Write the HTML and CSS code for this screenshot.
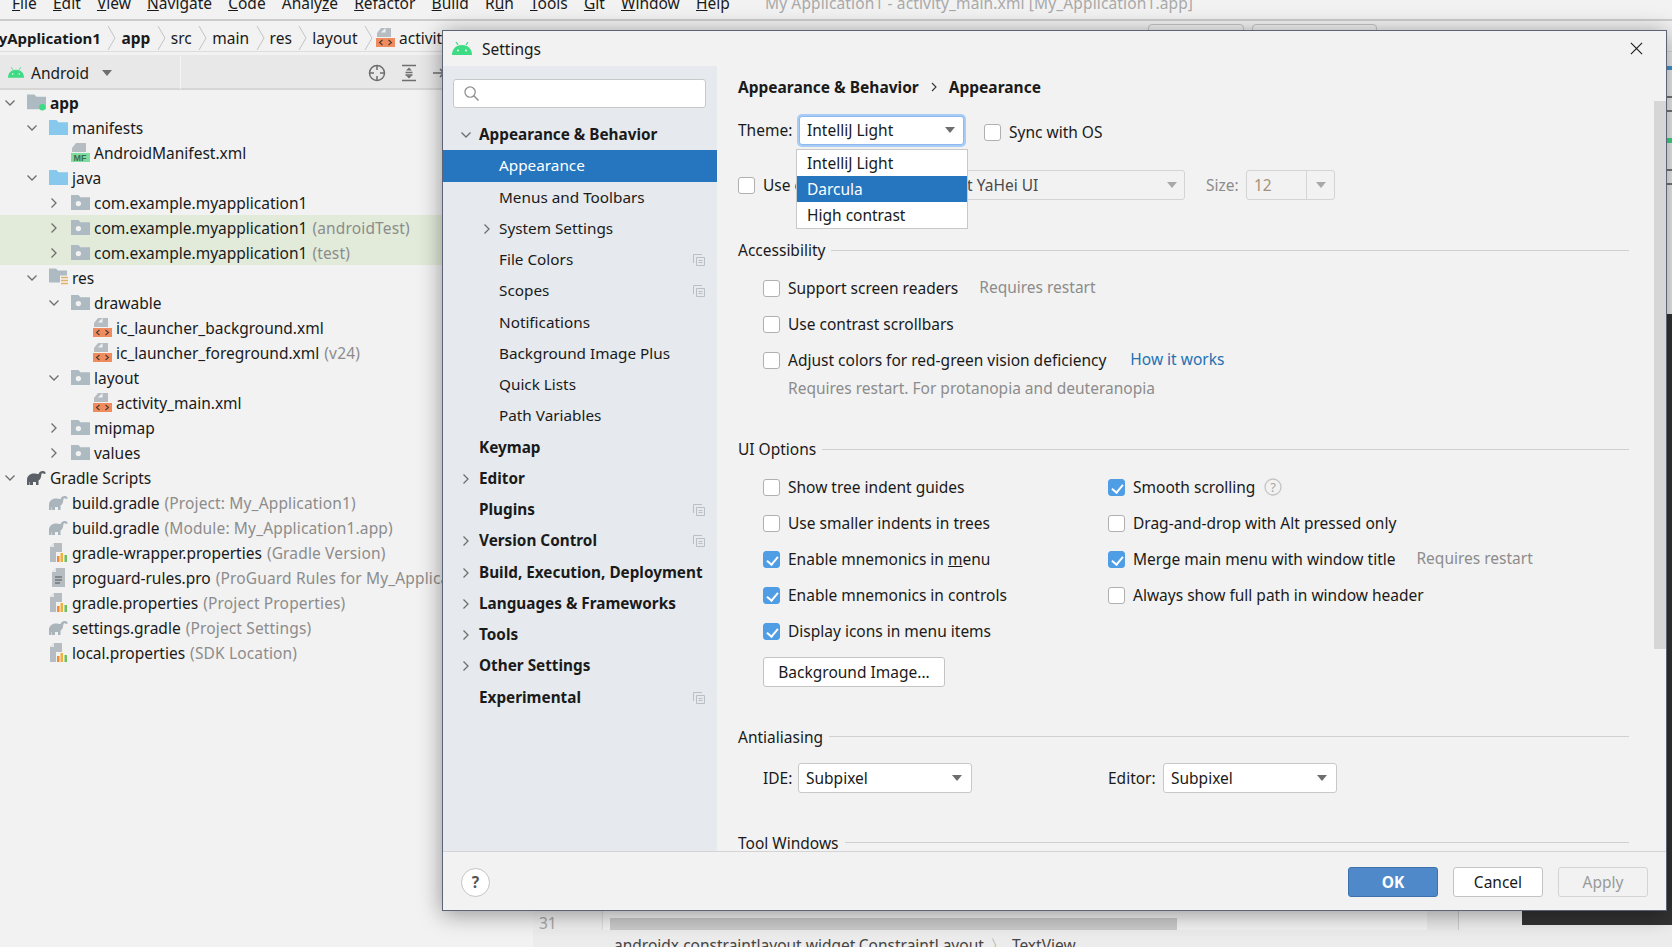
FILE: index.html
```html
<!DOCTYPE html>
<html lang="en">
<head>
    <meta charset="UTF-8">
    <meta name="viewport" content="width=device-width, initial-scale=1.0">
    <title>Settings - My Application1</title>
    <link rel="stylesheet" href="styles.css">
</head>
<body>

    <!-- Shared icons -->
    <svg class="sprites" width="0" height="0">
        <symbol id="i-android" viewBox="0 0 20 13">
            <path d="M4 0l2 3M16 0l-2 3" stroke="#3ddc84" stroke-width="1.2" fill="none"/>
            <path d="M0 13C0 7 4 3 10 3s10 4 10 10z" fill="#3ddc84"/>
            <circle cx="6" cy="8.5" r="1" fill="#f2f2f2"/>
            <circle cx="14" cy="8.5" r="1" fill="#f2f2f2"/>
        </symbol>
        <symbol id="i-down" viewBox="0 0 12 12">
            <path d="M1.5 3.5L6 8l4.500-4.500" stroke="#6e6e6e" stroke-width="1.300" fill="none"/>
        </symbol>
        <symbol id="i-right" viewBox="0 0 12 12">
            <path d="M3.500 1.500L8 6l-4.500 4.500" stroke="#6e6e6e" stroke-width="1.300" fill="none"/>
        </symbol>
        <symbol id="i-folder-blue" viewBox="0 0 18 14">
            <path d="M0 0h7l2 2h9v12H0z" fill="#87c9ec"/>
        </symbol>
        <symbol id="i-package" viewBox="0 0 18 14">
            <path d="M0 0h7l2 2h9v12H0z" fill="#aebac2"/>
            <circle cx="7" cy="8" r="2.500" fill="#f2f2f2"/>
        </symbol>
        <symbol id="i-module" viewBox="0 0 18 15">
            <path d="M0 0h7l2 2h9v12H0z" fill="#aebac2"/>
            <circle cx="14.500" cy="12" r="3" fill="#3ddc84"/>
        </symbol>
        <symbol id="i-res" viewBox="0 0 19 18">
            <path d="M0 0h7l2 2h9v12H0z" fill="#aebac2"/>
            <rect x="11" y="7" width="8" height="11" fill="#f2f2f2"/>
            <path d="M12 9h7M12 12h7M12 15h7" stroke="#e3b06a" stroke-width="1.300"/>
        </symbol>
        <symbol id="i-xml" viewBox="0 0 19 19">
            <path d="M5 0h10v9H5zM5 0L1 5v4h4z" fill="#b5bcc2"/>
            <path d="M5 4.500L9.500 0v4.500z" fill="#f2f2f2"/>
            <rect y="10" width="19" height="9" fill="#f08b5e"/>
            <path d="M6.500 12l-3 2.500 3 2.500M12.500 12l3 2.500-3 2.500" stroke="#4a3a30" stroke-width="1.100" fill="none"/>
        </symbol>
        <symbol id="i-gradle" viewBox="0 0 19 15">
            <path d="M0 15V10C0 6 3 3.500 7 3.500c2 0 3 .6 4.500.6C12.500 1 16.500 0 18.500 2.500c.5 1-.6 2-1.600 1.200-.8-.9-2.300-.6-2.600 1 0 3-1.300 5-2.800 5.800V15H9v-3H6v3H3v-3H2.600L2.500 15z" fill="#a9b4bb"/>
        </symbol>
        <symbol id="i-gradle-dark" viewBox="0 0 19 15">
            <path d="M0 15V10C0 6 3 3.500 7 3.500c2 0 3 .6 4.500.6C12.500 1 16.500 0 18.500 2.500c.5 1-.6 2-1.600 1.200-.8-.9-2.300-.6-2.600 1 0 3-1.300 5-2.800 5.800V15H9v-3H6v3H3v-3H2.600L2.500 15z" fill="#5b6166"/>
        </symbol>
        <symbol id="i-props" viewBox="0 0 17 19">
            <path d="M4 0h8v19H0V4z" fill="#b5bcc2"/>
            <path d="M4 0v4H0z" fill="#e8e8e8"/>
            <rect x="6" y="9" width="11" height="10" fill="#f2f2f2"/>
            <path d="M7 13h2.500v6H7z" fill="#f08b3c"/>
            <path d="M10.500 10H13v9h-2.500z" fill="#f0b13c"/>
            <path d="M14.500 12H17v7h-2.500z" fill="#6fbf5a"/>
        </symbol>
        <symbol id="i-pro" viewBox="0 0 13 19">
            <path d="M4 0h9v19H0V4z" fill="#b5bcc2"/>
            <path d="M4 0v4H0z" fill="#e8e8e8"/>
            <path d="M3 9h7M3 12h7M3 15h5" stroke="#555" stroke-width="1.200"/>
        </symbol>
        <symbol id="i-copy" viewBox="0 0 12 12">
            <path d="M.5 9V.5h8.500M3.500 3.500h8v8h-8zM5.500 6.500h4M5.500 8.500h4" stroke="#b9bfc5" stroke-width="1" fill="none"/>
        </symbol>
    </svg>

    <!-- IDE window behind the dialog -->
    <div class="ide">
        <div class="menubar">
            <span><u>F</u>ile</span>
            <span><u>E</u>dit</span>
            <span><u>V</u>iew</span>
            <span><u>N</u>avigate</span>
            <span><u>C</u>ode</span>
            <span>Analy<u>z</u>e</span>
            <span><u>R</u>efactor</span>
            <span><u>B</u>uild</span>
            <span>R<u>u</u>n</span>
            <span><u>T</u>ools</span>
            <span><u>G</u>it</span>
            <span><u>W</u>indow</span>
            <span><u>H</u>elp</span>
            <span class="window-title">My Application1 - activity_main.xml [My_Application1.app]</span>
        </div>

        <div class="navbar">
            <b class="first-crumb">MyApplication1</b>
            <svg class="crumb-sep"><path d="M1 2l7 12-7 12" stroke="#c4c4c4" fill="none"/></svg>
            <b>app</b>
            <svg class="crumb-sep"><path d="M1 2l7 12-7 12" stroke="#c4c4c4" fill="none"/></svg>
            <span>src</span>
            <svg class="crumb-sep"><path d="M1 2l7 12-7 12" stroke="#c4c4c4" fill="none"/></svg>
            <span>main</span>
            <svg class="crumb-sep"><path d="M1 2l7 12-7 12" stroke="#c4c4c4" fill="none"/></svg>
            <span>res</span>
            <svg class="crumb-sep"><path d="M1 2l7 12-7 12" stroke="#c4c4c4" fill="none"/></svg>
            <span>layout</span>
            <svg class="crumb-sep"><path d="M1 2l7 12-7 12" stroke="#c4c4c4" fill="none"/></svg>
            <svg class="icon-file"><use href="#i-xml"/></svg>
            <span>activity_main.xml</span>
            <div class="nav-tools">
                <div class="nav-tool wide"></div>
                <div class="nav-tool wider"></div>
            </div>
        </div>

        <div class="workspace">
            <div class="project">
                <div class="project-head">
                    <svg class="icon-android"><use href="#i-android"/></svg>
                    <span class="project-title">Android</span>
                    <span class="caret project-caret"></span>
                    <span class="head-divider"></span>
                    <svg class="head-tool" viewBox="0 0 18 18"><circle cx="9" cy="9" r="7.500" fill="none" stroke="#6e6e6e" stroke-width="1.500"/><path d="M9 1v5M9 12v5M1 9h5M12 9h5" stroke="#6e6e6e" stroke-width="1.500"/></svg>
                    <svg class="head-tool" viewBox="0 0 18 18"><path d="M2 1.500h14M2 16.500h14M5.500 8.500h7M5.500 11h7" stroke="#6e6e6e" stroke-width="1.500"/><path d="M9 3.500l3 3H6zM9 14.500l-3-3h6z" fill="#6e6e6e"/></svg>
                    <svg class="head-tool" viewBox="0 0 18 18"><path d="M1 9h11M8 5l4 4-4 4M15.500 2v14" stroke="#6e6e6e" stroke-width="1.500" fill="none"/></svg>
                </div>
                <div class="tree">
                    <div class="row l0"><svg class="chev"><use href="#i-down"/></svg><svg class="ico"><use href="#i-module"/></svg><b>app</b></div>
                    <div class="row l1"><svg class="chev"><use href="#i-down"/></svg><svg class="ico"><use href="#i-folder-blue"/></svg>manifests</div>
                    <div class="row l2"><span class="chev"></span><svg class="ico" viewBox="0 0 19 19"><path d="M5 0h10v9H5zM5 0L1 5v4h4z" fill="#b5bcc2"/><rect y="10" width="19" height="9" fill="#7fdc9f"/><text x="2.500" y="18" class="mf-text">MF</text></svg>AndroidManifest.xml</div>
                    <div class="row l1"><svg class="chev"><use href="#i-down"/></svg><svg class="ico"><use href="#i-folder-blue"/></svg>java</div>
                    <div class="row l2"><svg class="chev"><use href="#i-right"/></svg><svg class="ico"><use href="#i-package"/></svg>com.example.myapplication1</div>
                    <div class="row l2 tinted"><svg class="chev"><use href="#i-right"/></svg><svg class="ico"><use href="#i-package"/></svg>com.example.myapplication1<i>(androidTest)</i></div>
                    <div class="row l2 tinted"><svg class="chev"><use href="#i-right"/></svg><svg class="ico"><use href="#i-package"/></svg>com.example.myapplication1<i>(test)</i></div>
                    <div class="row l1"><svg class="chev"><use href="#i-down"/></svg><svg class="ico"><use href="#i-res"/></svg>res</div>
                    <div class="row l2"><svg class="chev"><use href="#i-down"/></svg><svg class="ico"><use href="#i-package"/></svg>drawable</div>
                    <div class="row l3"><span class="chev"></span><svg class="ico"><use href="#i-xml"/></svg>ic_launcher_background.xml</div>
                    <div class="row l3"><span class="chev"></span><svg class="ico"><use href="#i-xml"/></svg>ic_launcher_foreground.xml<i>(v24)</i></div>
                    <div class="row l2"><svg class="chev"><use href="#i-down"/></svg><svg class="ico"><use href="#i-package"/></svg>layout</div>
                    <div class="row l3"><span class="chev"></span><svg class="ico"><use href="#i-xml"/></svg>activity_main.xml</div>
                    <div class="row l2"><svg class="chev"><use href="#i-right"/></svg><svg class="ico"><use href="#i-package"/></svg>mipmap</div>
                    <div class="row l2"><svg class="chev"><use href="#i-right"/></svg><svg class="ico"><use href="#i-package"/></svg>values</div>
                    <div class="row l0"><svg class="chev"><use href="#i-down"/></svg><svg class="ico"><use href="#i-gradle-dark"/></svg>Gradle Scripts</div>
                    <div class="row l1"><span class="chev"></span><svg class="ico"><use href="#i-gradle"/></svg>build.gradle<i>(Project: My_Application1)</i></div>
                    <div class="row l1"><span class="chev"></span><svg class="ico"><use href="#i-gradle"/></svg>build.gradle<i>(Module: My_Application1.app)</i></div>
                    <div class="row l1"><span class="chev"></span><svg class="ico"><use href="#i-props"/></svg>gradle-wrapper.properties<i>(Gradle Version)</i></div>
                    <div class="row l1"><span class="chev"></span><svg class="ico"><use href="#i-pro"/></svg>proguard-rules.pro<i>(ProGuard Rules for My_Application1.app)</i></div>
                    <div class="row l1"><span class="chev"></span><svg class="ico"><use href="#i-props"/></svg>gradle.properties<i>(Project Properties)</i></div>
                    <div class="row l1"><span class="chev"></span><svg class="ico"><use href="#i-gradle"/></svg>settings.gradle<i>(Project Settings)</i></div>
                    <div class="row l1"><span class="chev"></span><svg class="ico"><use href="#i-props"/></svg>local.properties<i>(SDK Location)</i></div>
                </div>
            </div>

            <div class="editor">
                <div class="editor-body">
                    <div class="gutter"><span>31</span></div>
                    <div class="code"><div class="hscroll"></div></div>
                    <div class="strip"></div>
                    <div class="strip-rows"></div>
                    <div class="preview">
                        <div class="preview-tools">
                            <span class="tool-blue"></span>
                            <span class="tool-lines"></span>
                            <span class="tool-green"></span>
                            <span class="tool-lines"></span>
                        </div>
                        <div class="preview-dark"></div>
                    </div>
                </div>
                <div class="editor-crumbs">
                    <span>androidx.constraintlayout.widget.ConstraintLayout</span>
                    <span class="editor-sep">&#x3009;</span>
                    <span>TextView</span>
                </div>
            </div>
        </div>
    </div>

    <!-- Settings dialog -->
    <div class="dialog">
        <div class="dialog-title">
            <svg class="icon-settings"><use href="#i-android"/></svg>
            <span>Settings</span>
            <svg class="dialog-close" viewBox="0 0 14 14"><path d="M1 1l12 12M13 1L1 13" stroke="#1a1a1a" stroke-width="1.200"/></svg>
        </div>

        <div class="dialog-body">
            <!-- Left nav -->
            <div class="sidebar">
                <div class="search">
                    <svg class="search-icon" viewBox="0 0 16 16"><circle cx="6.500" cy="6.500" r="5.500" fill="none" stroke="#8c8c8c" stroke-width="1.300"/><path d="M10.500 10.500l5 5" stroke="#8c8c8c" stroke-width="1.500"/></svg>
                </div>
                <div class="nav">
                    <div class="nav-row top"><svg class="nav-chev"><use href="#i-down"/></svg>Appearance &amp; Behavior</div>
                    <div class="nav-row sub selected">Appearance</div>
                    <div class="nav-row sub">Menus and Toolbars</div>
                    <div class="nav-row sub"><svg class="nav-chev sub-chev"><use href="#i-right"/></svg>System Settings</div>
                    <div class="nav-row sub">File Colors<svg class="copy"><use href="#i-copy"/></svg></div>
                    <div class="nav-row sub">Scopes<svg class="copy"><use href="#i-copy"/></svg></div>
                    <div class="nav-row sub">Notifications</div>
                    <div class="nav-row sub">Background Image Plus</div>
                    <div class="nav-row sub">Quick Lists</div>
                    <div class="nav-row sub">Path Variables</div>
                    <div class="nav-row top">Keymap</div>
                    <div class="nav-row top"><svg class="nav-chev"><use href="#i-right"/></svg>Editor</div>
                    <div class="nav-row top">Plugins<svg class="copy"><use href="#i-copy"/></svg></div>
                    <div class="nav-row top"><svg class="nav-chev"><use href="#i-right"/></svg>Version Control<svg class="copy"><use href="#i-copy"/></svg></div>
                    <div class="nav-row top"><svg class="nav-chev"><use href="#i-right"/></svg>Build, Execution, Deployment</div>
                    <div class="nav-row top"><svg class="nav-chev"><use href="#i-right"/></svg>Languages &amp; Frameworks</div>
                    <div class="nav-row top"><svg class="nav-chev"><use href="#i-right"/></svg>Tools</div>
                    <div class="nav-row top"><svg class="nav-chev"><use href="#i-right"/></svg>Other Settings</div>
                    <div class="nav-row top">Experimental<svg class="copy"><use href="#i-copy"/></svg></div>
                </div>
            </div>

            <!-- Appearance page -->
            <div class="content">
                <div class="page-crumb">
                    <b>Appearance &amp; Behavior</b>
                    <svg class="page-sep" viewBox="0 0 8 10"><path d="M2 1l4 4-4 4" stroke="#333" stroke-width="1.100" fill="none"/></svg>
                    <b>Appearance</b>
                </div>

                <div class="theme-row">
                    <span class="theme-label">Theme:</span>
                    <div class="combo focused">IntelliJ Light<span class="caret"></span></div>
                    <label class="check sync"><span class="box"></span>Sync with OS</label>
                </div>

                <div class="font-row">
                    <span class="box"></span>
                    <span class="use-label">Use custom font:</span>
                    <div class="combo disabled font-combo">Microsoft YaHei UI<span class="caret light"></span></div>
                    <span class="size-label">Size:</span>
                    <div class="combo disabled size-combo"><span class="size-value">12</span><span class="size-arrow"><span class="caret light"></span></span></div>
                </div>

                <div class="group-title first-group"><span>Accessibility</span></div>
                <div class="group">
                    <div class="opt"><span class="box"></span>Support screen readers<span class="hint">Requires restart</span></div>
                    <div class="opt"><span class="box"></span>Use contrast scrollbars</div>
                    <div class="opt"><span class="box"></span>Adjust colors for red-green vision deficiency<a class="link">How it works</a></div>
                    <div class="note">Requires restart. For protanopia and deuteranopia</div>
                </div>

                <div class="group-title"><span>UI Options</span></div>
                <div class="group options-grid">
                    <div class="opt"><span class="box"></span>Show tree indent guides</div>
                    <div class="opt"><span class="box on"></span>Smooth scrolling<svg class="help-small" viewBox="0 0 18 18"><circle cx="9" cy="9" r="8" fill="none" stroke="#c4c4c4" stroke-width="1.300"/><text x="9" y="13.500" class="help-mark">?</text></svg></div>
                    <div class="opt"><span class="box"></span>Use smaller indents in trees</div>
                    <div class="opt"><span class="box"></span>Drag-and-drop with Alt pressed only</div>
                    <div class="opt"><span class="box on"></span><span>Enable mnemonics in <u>m</u>enu</span></div>
                    <div class="opt"><span class="box on"></span>Merge main menu with window title<span class="hint">Requires restart</span></div>
                    <div class="opt"><span class="box on"></span>Enable mnemonics in controls</div>
                    <div class="opt"><span class="box"></span>Always show full path in window header</div>
                    <div class="opt"><span class="box on"></span>Display icons in menu items</div>
                </div>
                <button class="btn bg-btn">Background Image...</button>

                <div class="group-title aa-title"><span>Antialiasing</span></div>
                <div class="aa-row">
                    <span class="aa-label">IDE:</span>
                    <div class="combo aa-combo">Subpixel<span class="caret"></span></div>
                    <span class="aa-label editor-label">Editor:</span>
                    <div class="combo aa-combo">Subpixel<span class="caret"></span></div>
                </div>

                <div class="group-title"><span>Tool Windows</span></div>

                <!-- Theme dropdown, open over the page -->
                <div class="popup">
                    <div class="popup-item">IntelliJ Light</div>
                    <div class="popup-item active">Darcula</div>
                    <div class="popup-item">High contrast</div>
                </div>
                <div class="scrollbar"></div>
            </div>
        </div>

        <div class="dialog-footer">
            <div class="help-btn">?</div>
            <button class="btn primary">OK</button>
            <button class="btn">Cancel</button>
            <button class="btn off">Apply</button>
        </div>
    </div>

</body>
</html>
```

FILE: styles.css
```css
/* General Styling */
* {
    box-sizing: border-box;
}

body {
    font-family: "Noto Sans", "Open Sans", sans-serif;
    font-size: 15.5px;
    color: #1a1a1a;
    background-color: #f2f2f2;
    margin: 0;
    width: 1672px;
    height: 947px;
    overflow: hidden;
    position: relative;
}

.sprites {
    position: absolute;
}

/* IDE behind the dialog */
.ide {
    display: flex;
    flex-direction: column;
    height: 947px;
}

.menubar {
    display: flex;
    gap: 16.2px;
    height: 21px;
    padding-left: 12px;
    border-bottom: 2px solid #cccccc;
    overflow: hidden;
    flex-shrink: 0;
}

.menubar span {
    margin-top: -9px;
    line-height: 24px;
    white-space: nowrap;
}

.menubar .window-title {
    color: #a9a9a9;
    margin-left: 19px;
    letter-spacing: 0.13px;
}

.navbar {
    display: flex;
    align-items: center;
    height: 31px;
    padding-top: 3px;
    flex-shrink: 0;
    white-space: nowrap;
    overflow: hidden;
    border-bottom: 1px solid #dcdcdc;
}

.first-crumb {
    margin-left: -15.5px;
    font-size: 15px;
}

.crumb-sep {
    width: 9px;
    height: 28px;
    margin: 0 5px 0 6.5px;
    flex-shrink: 0;
}

.icon-file {
    width: 19px;
    height: 19px;
    margin-right: 4px;
    margin-left: -2px;
    flex-shrink: 0;
}

.nav-tools {
    display: flex;
    gap: 8px;
    position: absolute;
    left: 1148px;
    top: 24px;
}

.nav-tool {
    height: 24px;
    border: 1px solid #c4c4c4;
    border-radius: 4px;
}

.nav-tool.wide {
    width: 96px;
}

.nav-tool.wider {
    width: 125px;
}

.workspace {
    display: flex;
    flex: 1;
    min-height: 0;
}

.project {
    width: 533px;
    flex-shrink: 0;
}

.project-head {
    display: flex;
    align-items: center;
    height: 35px;
    margin-top: 3px;
    padding: 2px 0 0 8px;
    background-color: #e8e8e8;
    border-bottom: 2px solid #d6d6d6;
}

.icon-android {
    width: 16px;
    height: 11px;
}

.project-title {
    margin-left: 7px;
}

.caret {
    display: inline-block;
    width: 0;
    height: 0;
    border-left: 5.5px solid transparent;
    border-right: 5.5px solid transparent;
    border-top: 6px solid #6e6e6e;
}

.caret.light {
    border-top-color: #a8a8a8;
}

.project-caret {
    margin-left: 13px;
}

.head-divider {
    width: 1px;
    height: 33px;
    background-color: #f4f4f4;
    margin-left: 68px;
    margin-right: 187px;
}

.head-tool {
    width: 18px;
    height: 18px;
    margin-right: 14px;
    flex-shrink: 0;
}

.row {
    display: flex;
    align-items: center;
    height: 25px;
    white-space: nowrap;
}

.row i {
    font-style: normal;
    color: #8c8c8c;
    margin-left: 5px;
    letter-spacing: 0.15px;
}

.row.tinted {
    background-color: #e2ebda;
}

.l0 { padding-left: 5px; }
.l1 { padding-left: 27px; }
.l2 { padding-left: 49px; }
.l3 { padding-left: 71px; }

.chev {
    display: block;
    width: 12px;
    height: 12px;
    margin: 0 11px 0 -1px;
    flex-shrink: 0;
}

.ico {
    width: 19px;
    height: 19px;
    margin-right: 4px;
    flex-shrink: 0;
}

.mf-text {
    font-family: "Liberation Sans", sans-serif;
    font-size: 9px;
    font-weight: bold;
    fill: #3d6b4d;
}

.editor {
    flex: 1;
    display: flex;
    flex-direction: column;
    min-width: 0;
    background-color: #ededed;
}

.editor-body {
    flex: 1;
    display: flex;
    min-height: 0;
}

.gutter {
    width: 70px;
    display: flex;
    align-items: flex-end;
    padding: 0 0 0 6px;
    color: #a6a6a6;
    background-color: #efefef;
    border-right: 1px solid #dddddd;
    line-height: 14px;
}

.code {
    flex: 1;
    display: flex;
    align-items: flex-end;
    padding-left: 7px;
    background-color: #f3f3f3;
}

.hscroll {
    width: 567px;
    height: 12px;
    background-color: #cbcbcb;
}

.strip {
    width: 31px;
    background-color: #e9e9e9;
}

.strip-rows {
    width: 64px;
    border-left: 1px solid #cccccc;
    background-color: #efefef;
}

.preview {
    width: 150px;
    display: flex;
    flex-direction: column;
}

.preview-tools {
    height: 262px;
    background-color: #f0f0f0;
    padding: 14px 0 0 145px;
}

.preview-tools span {
    display: block;
}

.tool-blue {
    width: 5px;
    height: 4px;
    background-color: #3f97d6;
}

.tool-lines {
    width: 5px;
    height: 16px;
    margin-top: 26px;
    border-top: 2px solid #777777;
    border-bottom: 2px solid #777777;
}

.tool-green {
    width: 5px;
    height: 5px;
    margin-top: 26px;
    background-color: #3ddc84;
}

.preview-dark {
    flex: 1;
    margin-bottom: 5px;
    background-color: #333333;
}

.editor-crumbs {
    height: 17px;
    padding-left: 81px;
    white-space: nowrap;
    overflow: hidden;
    line-height: 30px;
    color: #444444;
    background-color: #ececec;
}

.editor-sep {
    color: #999999;
    margin: 0 2px;
}

/* Settings dialog */
.dialog {
    position: absolute;
    left: 442px;
    top: 30px;
    width: 1225px;
    height: 881px;
    display: flex;
    flex-direction: column;
    background-color: #f2f2f2;
    border: 1px solid #5b6577;
    box-shadow: 0 3px 22px rgba(0, 0, 0, 0.4);
}

.dialog-title {
    display: flex;
    align-items: center;
    height: 35px;
    flex-shrink: 0;
    padding-left: 9px;
}

.icon-settings {
    width: 20px;
    height: 13px;
    margin-right: 10px;
}

.dialog-close {
    width: 13px;
    height: 13px;
    margin-left: auto;
    margin-right: 23px;
}

.dialog-body {
    flex: 1;
    display: flex;
    min-height: 0;
    border-bottom: 1px solid #d4d4d4;
}

.sidebar {
    width: 274px;
    flex-shrink: 0;
    background-color: #e6eaee;
    padding-top: 13px;
}

.search {
    display: flex;
    align-items: center;
    height: 29px;
    margin: 0 11px 0 10px;
    padding-left: 10px;
    background-color: #ffffff;
    border: 1px solid #c8c8c8;
    border-radius: 3px;
}

.search-icon {
    width: 15px;
    height: 15px;
}

.nav {
    margin-top: 11px;
    font-size: 15.3px;
}

.nav-row {
    display: flex;
    align-items: center;
    height: 31.25px;
    padding-bottom: 1px;
    position: relative;
    white-space: nowrap;
}

.nav-row.top {
    padding-left: 36px;
    font-weight: 700;
}

.nav-row.sub {
    padding-left: 56px;
}

.nav-row.selected {
    background-color: #2675bf;
    color: #ffffff;
}

.nav-chev {
    position: absolute;
    left: 17px;
    top: 10px;
    width: 12px;
    height: 12px;
}

.nav-chev.sub-chev {
    left: 38px;
}

.copy {
    position: absolute;
    right: 12px;
    top: 10px;
    width: 12px;
    height: 12px;
}

.content {
    flex: 1;
    position: relative;
    overflow: hidden;
    padding-left: 21px;
    min-width: 0;
}

.page-crumb {
    display: flex;
    align-items: center;
    height: 44px;
    padding-bottom: 2px;
}

.page-sep {
    width: 8px;
    height: 10px;
    margin: 0 11px;
}

.theme-row {
    display: flex;
    align-items: center;
    height: 40px;
}

.theme-label {
    width: 61px;
}

.combo {
    display: flex;
    align-items: center;
    justify-content: space-between;
    height: 30px;
    padding: 0 7px;
    background-color: #ffffff;
    border: 1px solid #c8c8c8;
    border-radius: 3px;
    white-space: nowrap;
    overflow: hidden;
}

.combo.focused {
    width: 165px;
    height: 29px;
    padding: 0 8px 0 7px;
    border: 1px solid #8db9ee;
    box-shadow: 0 0 0 2px #a8ccf5;
}

.combo.disabled {
    background-color: transparent;
    border-color: #d4d4d4;
}

.box {
    display: inline-block;
    width: 17px;
    height: 17px;
    flex-shrink: 0;
    margin-right: 8px;
    background-color: #ffffff;
    border: 1px solid #b0b0b0;
    border-radius: 3px;
    position: relative;
}

.box.on {
    background-color: #4f9de4;
    border-color: #4f9de4;
}

.box.on::after {
    content: "";
    position: absolute;
    left: 5px;
    top: 2px;
    width: 5px;
    height: 9px;
    border-right: 2px solid #ffffff;
    border-bottom: 2px solid #ffffff;
    transform: rotate(40deg);
}

.check {
    display: flex;
    align-items: center;
}

.sync {
    margin-left: 20px;
    padding-top: 4px;
}

.font-row {
    display: flex;
    align-items: center;
    height: 30px;
    margin-top: 20px;
    white-space: nowrap;
}

.use-label {
    width: 127px;
}

.font-combo {
    width: 295px;
    padding-left: 13px;
    color: #4a4a4a;
}

.size-label {
    margin-left: 21px;
    width: 40px;
    color: #8c8c8c;
}

.size-combo {
    width: 89px;
    padding: 0;
    color: #a5917a;
}

.size-value {
    padding-left: 7px;
}

.size-arrow {
    display: flex;
    align-items: center;
    justify-content: center;
    width: 28px;
    height: 100%;
    border-left: 1px solid #d4d4d4;
}

.group-title {
    display: flex;
    align-items: center;
    gap: 6px;
    height: 24px;
    width: 891px;
    margin-top: 39px;
}

.group-title::after {
    content: "";
    flex: 1;
    height: 1px;
    background-color: #d0d0d0;
}

.group-title.first-group {
    margin-top: 38px;
}

.group {
    margin-top: 8px;
    padding-left: 25px;
}

.opt {
    display: flex;
    align-items: center;
    height: 36px;
    white-space: nowrap;
}

.hint {
    color: #8c8c8c;
    margin-left: 21px;
    padding-bottom: 2px;
}

.link {
    color: #2470b3;
    margin-left: 24px;
    padding-bottom: 2px;
}

.note {
    height: 20px;
    line-height: 20px;
    padding-left: 25px;
    color: #8c8c8c;
}

.options-grid {
    display: grid;
    grid-template-columns: 345px 1fr;
}

.options-grid .opt {
    height: 36.1px;
}

.help-small {
    width: 18px;
    height: 18px;
    margin-left: 9px;
    margin-bottom: 1px;
}

.help-mark {
    font-size: 13px;
    fill: #a8a8a8;
    text-anchor: middle;
}

.btn {
    font: inherit;
    color: #1a1a1a;
    width: 90px;
    height: 30px;
    padding: 0;
    background-color: #ffffff;
    border: 1px solid #c4c4c4;
    border-radius: 3px;
}

.bg-btn {
    display: block;
    width: 182px;
    margin: 7.5px 0 0 25px;
}

.aa-title {
    margin-top: 38px;
}

.aa-row {
    display: flex;
    align-items: center;
    margin-top: 14px;
    margin-bottom: -1px;
    padding-left: 25px;
}

.aa-label {
    width: 35px;
}

.aa-combo {
    width: 174px;
    padding-right: 9px;
}

.editor-label {
    width: 55px;
    margin-left: 136px;
}

.popup {
    position: absolute;
    left: 79px;
    top: 83px;
    width: 172px;
    height: 80px;
    background-color: #ffffff;
    border: 1px solid #c8c8c8;
}

.popup-item {
    height: 26px;
    line-height: 27px;
    padding-left: 10px;
}

.popup-item.active {
    background-color: #2675bf;
    color: #ffffff;
}

.scrollbar {
    position: absolute;
    right: 0;
    top: 35px;
    width: 12px;
    height: 548px;
    background-color: #d6d6d6;
}

/* Footer */
.dialog-footer {
    display: flex;
    align-items: center;
    gap: 15px;
    height: 58px;
    flex-shrink: 0;
    padding: 2px 18px 0;
}

.help-btn {
    width: 29px;
    height: 29px;
    line-height: 27px;
    margin-right: auto;
    text-align: center;
    font-weight: 700;
    color: #555555;
    background-color: #ffffff;
    border: 1px solid #c4c4c4;
    border-radius: 50%;
}

.btn.primary {
    background-color: #4f89ca;
    border-color: #3e72ad;
    color: #ffffff;
    font-weight: 700;
}

.btn.off {
    background-color: transparent;
    border-color: #d4d4d4;
    color: #9a9a9a;
}
```
